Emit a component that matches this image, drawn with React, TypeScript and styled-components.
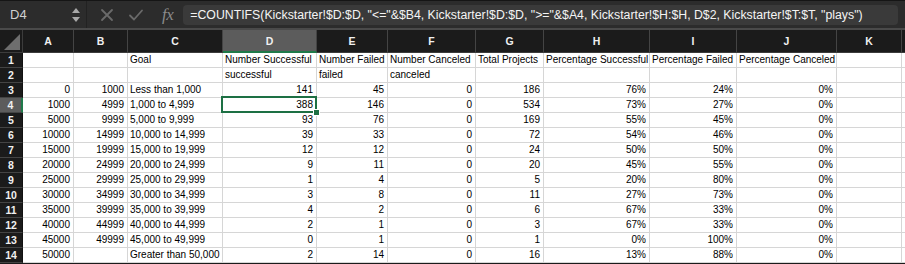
import React from "react";
import styled, { createGlobalStyle } from "styled-components";

const GlobalStyle = createGlobalStyle`
  html, body { margin: 0; padding: 0; background: #1b1b1b; }
  * { box-sizing: border-box; }
`;

const Frame = styled.div`
  width: 905px;
  height: 264px;
  overflow: hidden;
  display: flex;
  flex-direction: column;
  background: #1b1b1b;
  font-family: "Liberation Sans", Arial, sans-serif;
`;

const FormulaBar = styled.div`
  height: 30px;
  flex: none;
  display: flex;
  align-items: stretch;
  background: #2c2c2c;
  border-top: 1px solid #151515;
  border-bottom: 2px solid #4a4a4a;
`;

const NameBox = styled.div`
  width: 87px;
  display: flex;
  align-items: center;
  justify-content: space-between;
  padding: 0 4px 0 10px;
  border-right: 1px solid #222;
  color: #d0d0d0;
  font-size: 13px;
`;

const Spinner = styled.svg`
  width: 12px;
  height: 20px;
  display: block;
`;

const ActionGroup = styled.div`
  display: flex;
  align-items: center;
  gap: 14px;
  padding: 0 10px 0 13px;
`;

const Fx = styled.span`
  font-family: "Liberation Serif", "Times New Roman", serif;
  font-style: italic;
  font-size: 17px;
  color: #8a8a8a;
  margin-left: 4px;
  letter-spacing: -0.5px;
`;

const FormulaInput = styled.div`
  flex: 1;
  margin: 4px 7px 3px 0;
  background: #3a3a3a;
  border-radius: 4px;
  display: flex;
  align-items: center;
  padding-left: 7px;
  color: #f4f4f4;
  font-size: 12.3px;
  white-space: nowrap;
  overflow: hidden;
`;

const Sheet = styled.div`
  display: grid;
  grid-template-columns: 23px 51px 54px 95px 94px 71px 88px 68px 106px 87px 100px 65px 40px;
  grid-template-rows: 23px;
  grid-auto-rows: 15px;
  font-size: 10px;
`;

const Corner = styled.div`
  background: #1b1b1b;
  border-right: 1px solid #3c3c3c;
  border-bottom: 1px solid #3c3c3c;
  display: flex;
  align-items: flex-end;
  justify-content: flex-end;
  padding: 0 2px 2px 0;
`;

const ColHeader = styled.div<{ $selected?: boolean }>`
  background: ${(p) => (p.$selected ? "#5c5c5c" : "#1b1b1b")};
  color: #f0f0f0;
  font-weight: bold;
  font-size: 10.5px;
  display: flex;
  align-items: center;
  justify-content: center;
  border-right: 1px solid #444;
  border-bottom: ${(p) => (p.$selected ? "2px solid #1f7a4a" : "1px solid #3c3c3c")};
`;

const RowHeader = styled.div<{ $selected?: boolean }>`
  background: ${(p) => (p.$selected ? "#5c5c5c" : "#1b1b1b")};
  color: #f0f0f0;
  font-weight: bold;
  font-size: 10.5px;
  display: flex;
  align-items: center;
  justify-content: center;
  border-bottom: 1px solid #444;
  border-right: ${(p) => (p.$selected ? "2px solid #1f7a4a" : "1px solid #111")};
`;

const Cell = styled.div<{ $align?: "left" | "right"; $active?: boolean }>`
  position: relative;
  background: #ffffff;
  color: #000;
  border-right: 1px solid #d6d6d6;
  border-bottom: 1px solid #d6d6d6;
  display: flex;
  align-items: center;
  justify-content: ${(p) => (p.$align === "right" ? "flex-end" : "flex-start")};
  padding: 0 3px 0 2px;
  white-space: nowrap;
  line-height: 14px;
  ${(p) =>
    p.$active &&
    `
    &::after {
      content: "";
      position: absolute;
      left: -2px;
      top: -2px;
      right: -1px;
      bottom: -1px;
      border: 2px solid #1d7044;
      pointer-events: none;
      z-index: 2;
    }
    &::before {
      content: "";
      position: absolute;
      right: -4px;
      bottom: -4px;
      width: 5px;
      height: 5px;
      background: #1d7044;
      border: 1px solid #fff;
      z-index: 3;
    }
  `}
`;

const columns = ["A", "B", "C", "D", "E", "F", "G", "H", "I", "J", "K", ""];

type Row = (string | number)[];

const rows: Row[] = [
  ["", "", "Goal", "Number Successful", "Number Failed", "Number Canceled", "Total Projects", "Percentage Successful", "Percentage Failed", "Percentage Canceled", "", ""],
  ["", "", "", "successful", "failed", "canceled", "", "", "", "", "", ""],
  [0, 1000, "Less than 1,000", 141, 45, 0, 186, "76%", "24%", "0%", "", ""],
  [1000, 4999, "1,000 to 4,999", 388, 146, 0, 534, "73%", "27%", "0%", "", ""],
  [5000, 9999, "5,000 to 9,999", 93, 76, 0, 169, "55%", "45%", "0%", "", ""],
  [10000, 14999, "10,000 to 14,999", 39, 33, 0, 72, "54%", "46%", "0%", "", ""],
  [15000, 19999, "15,000 to 19,999", 12, 12, 0, 24, "50%", "50%", "0%", "", ""],
  [20000, 24999, "20,000 to 24,999", 9, 11, 0, 20, "45%", "55%", "0%", "", ""],
  [25000, 29999, "25,000 to 29,999", 1, 4, 0, 5, "20%", "80%", "0%", "", ""],
  [30000, 34999, "30,000 to 34,999", 3, 8, 0, 11, "27%", "73%", "0%", "", ""],
  [35000, 39999, "35,000 to 39,999", 4, 2, 0, 6, "67%", "33%", "0%", "", ""],
  [40000, 44999, "40,000 to 44,999", 2, 1, 0, 3, "67%", "33%", "0%", "", ""],
  [45000, 49999, "45,000 to 49,999", 0, 1, 0, 1, "0%", "100%", "0%", "", ""],
  [50000, "", "Greater than 50,000", 2, 14, 0, 16, "13%", "88%", "0%", "", ""],
];

const isRight = (v: string | number) =>
  typeof v === "number" || /^\d+%$/.test(String(v));

const formula =
  '=COUNTIFS(Kickstarter!$D:$D, "<="&$B4, Kickstarter!$D:$D, ">="&$A4, Kickstarter!$H:$H, D$2, Kickstarter!$T:$T, "plays")';

export default function App() {
  return (
    <>
      <GlobalStyle />
      <Frame>
        <FormulaBar>
          <NameBox>
            <span>D4</span>
            <Spinner viewBox="0 0 12 20">
              <path d="M6 3 L10 8 L2 8 Z" fill="#a8a8a8" />
              <path d="M2 12 L10 12 L6 17 Z" fill="#a8a8a8" />
            </Spinner>
          </NameBox>
          <ActionGroup>
            <svg width="14" height="14" viewBox="0 0 14 14">
              <path d="M2 2 L12 12 M12 2 L2 12" stroke="#6a6a6a" strokeWidth="1.8" strokeLinecap="round" />
            </svg>
            <svg width="16" height="14" viewBox="0 0 16 14">
              <path d="M2 7.5 L6 11.5 L14 2.5" stroke="#6a6a6a" strokeWidth="1.8" fill="none" strokeLinecap="round" strokeLinejoin="round" />
            </svg>
            <Fx>fx</Fx>
          </ActionGroup>
          <FormulaInput>{formula}</FormulaInput>
        </FormulaBar>
        <Sheet>
          <Corner>
            <svg width="16" height="16" viewBox="0 0 16 16">
              <path d="M16 0 L16 16 L0 16 Z" fill="#6e6e6e" />
            </svg>
          </Corner>
          {columns.map((c, i) => (
            <ColHeader key={i} $selected={c === "D"}>
              {c}
            </ColHeader>
          ))}
          {rows.map((row, r) => (
            <React.Fragment key={r}>
              <RowHeader $selected={r === 3}>{r + 1}</RowHeader>
              {row.map((v, c) => (
                <Cell
                  key={c}
                  $align={isRight(v) ? "right" : "left"}
                  $active={r === 3 && c === 3}
                >
                  {v}
                </Cell>
              ))}
            </React.Fragment>
          ))}
        </Sheet>
      </Frame>
    </>
  );
}
